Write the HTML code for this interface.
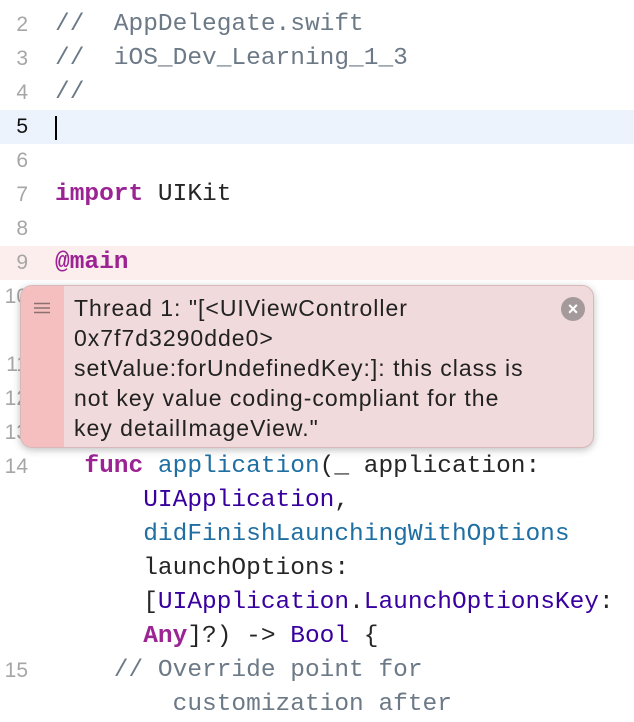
<!DOCTYPE html>
<html><head><style>
body{margin:0;width:634px;height:704px;overflow:hidden;background:#fff;position:relative;font-family:"Liberation Mono",monospace;font-size:24.5px}
.l{position:absolute;left:0;width:634px;height:34px;line-height:34px;white-space:pre;color:#262626}
.n{position:absolute;right:606px;color:#a6a6a6;font-family:"Liberation Sans",sans-serif;font-size:21px}
.c{position:absolute;left:55px}
.cm{color:#6c7986}.kw{color:#9b2393;font-weight:bold}.ty{color:#3900a0}.fn{color:#1f6fa3}.at{color:#9b2393;font-weight:bold}
.pop{position:absolute;left:20px;top:285px;width:574px;height:163px;border-radius:12px;background:#f0dadc;overflow:hidden;box-shadow:0 2px 8px rgba(0,0,0,.25);border:1px solid #d8b8ba;box-sizing:border-box}
.strip{position:absolute;left:0;top:0;width:43px;height:100%;background:#f4bfbe}
.msg{position:absolute;left:53px;top:7px;font-family:"Liberation Sans",sans-serif;font-size:23px;letter-spacing:1px;line-height:30px;color:#222;width:500px;white-space:nowrap}
.x{position:absolute;left:540px;top:11px;width:24px;height:24px;border-radius:50%;background:#a59a9b;color:#fff;font-family:"Liberation Sans",sans-serif;font-size:18px;line-height:24px;text-align:center;font-weight:bold}
</style></head><body>
<div class="l" style="top:-26px"><span class="n">1</span><span class="c cm">//</span></div>
<div class="l" style="top:8px"><span class="n">2</span><span class="c cm">//  AppDelegate.swift</span></div>
<div class="l" style="top:42px"><span class="n">3</span><span class="c cm">//  iOS_Dev_Learning_1_3</span></div>
<div class="l" style="top:76px"><span class="n">4</span><span class="c cm">//</span></div>
<div class="l" style="top:110px;background:#ecf3fd"><span class="n" style="color:#111">5</span><span class="c" style="top:6px;width:2px;height:24px;background:#000"></span></div>
<div class="l" style="top:144px"><span class="n">6</span></div>
<div class="l" style="top:178px"><span class="n">7</span><span class="c"><span class="kw">import</span> UIKit</span></div>
<div class="l" style="top:212px"><span class="n">8</span></div>
<div class="l" style="top:246px;background:#fdeeee"><span class="n">9</span><span class="c at">@main</span></div>
<div class="l" style="top:280px"><span class="n">10</span></div>
<div class="l" style="top:348px"><span class="n">11</span></div>
<div class="l" style="top:382px"><span class="n">12</span></div>
<div class="l" style="top:416px"><span class="n">13</span></div>
<div class="l" style="top:450px"><span class="n">14</span><span class="c">  <span class="kw">func</span> <span class="fn">application</span>(_ application:</span></div>
<div class="l" style="top:484px"><span class="c">      <span class="ty">UIApplication</span>,</span></div>
<div class="l" style="top:518px"><span class="c">      <span class="fn">didFinishLaunchingWithOptions</span></span></div>
<div class="l" style="top:552px"><span class="c">      launchOptions:</span></div>
<div class="l" style="top:586px"><span class="c">      [<span class="ty">UIApplication</span>.<span class="ty">LaunchOptionsKey</span>:</span></div>
<div class="l" style="top:620px"><span class="c">      <span class="kw">Any</span>]?) -&gt; <span class="ty">Bool</span> {</span></div>
<div class="l" style="top:654px"><span class="n">15</span><span class="c cm">    // Override point for</span></div>
<div class="l" style="top:688px"><span class="c cm">        customization after</span></div>
<div class="pop"><div class="strip"></div>
<svg style="position:absolute;left:12px;top:16px" width="18" height="12"><path d="M1 1.5H17M1 6H17M1 10.5H17" stroke="#8a7070" stroke-width="1.6"/></svg>
<div class="msg">Thread 1: "[&lt;UIViewController<br>0x7f7d3290dde0&gt;<br>setValue:forUndefinedKey:]: this class is<br>not key value coding-compliant for the<br>key detailImageView."</div>
<div class="x">×</div></div>
</body></html>
